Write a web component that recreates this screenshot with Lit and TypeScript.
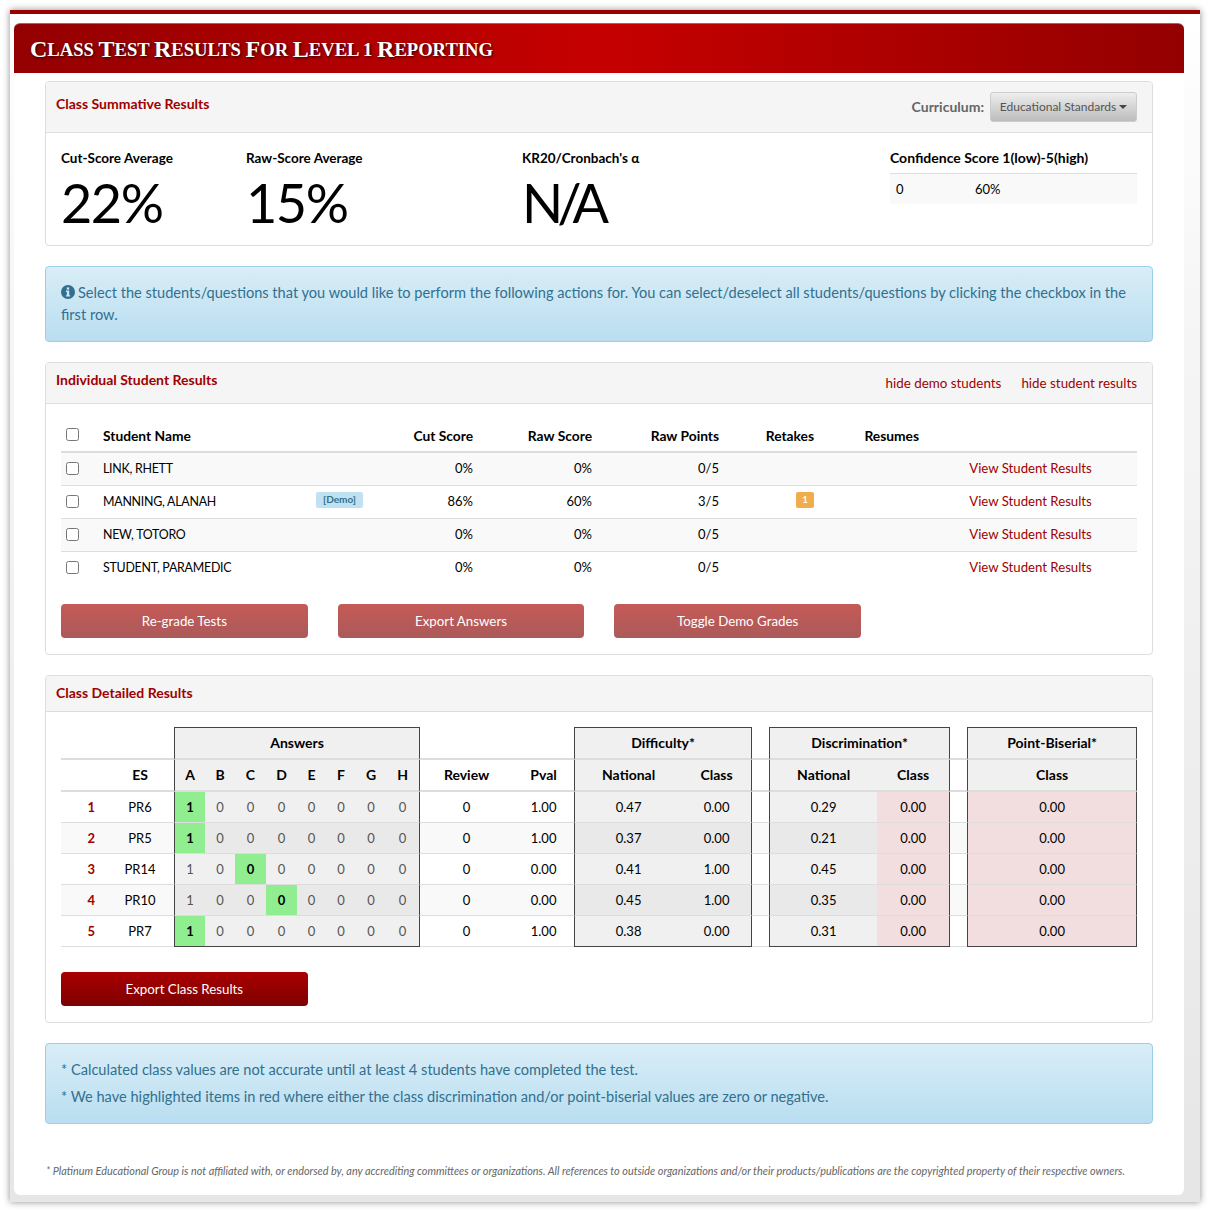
import { LitElement, html, css } from "lit";
import { customElement } from "lit/decorators.js";

const students = [
  { name: "LINK, RHETT", demo: false, cut: "0%", raw: "0%", pts: "0/5", retake: "" },
  { name: "MANNING, ALANAH", demo: true, cut: "86%", raw: "60%", pts: "3/5", retake: "1" },
  { name: "NEW, TOTORO", demo: false, cut: "0%", raw: "0%", pts: "0/5", retake: "" },
  { name: "STUDENT, PARAMEDIC", demo: false, cut: "0%", raw: "0%", pts: "0/5", retake: "" },
];

const questions = [
  { es: "PR6", ans: ["1", "0", "0", "0", "0", "0", "0", "0"], ok: 0, pval: "1.00", nat: "0.47", cls: "0.00", dn: "0.29" },
  { es: "PR5", ans: ["1", "0", "0", "0", "0", "0", "0", "0"], ok: 0, pval: "1.00", nat: "0.37", cls: "0.00", dn: "0.21" },
  { es: "PR14", ans: ["1", "0", "0", "0", "0", "0", "0", "0"], ok: 2, pval: "0.00", nat: "0.41", cls: "1.00", dn: "0.45" },
  { es: "PR10", ans: ["1", "0", "0", "0", "0", "0", "0", "0"], ok: 3, pval: "0.00", nat: "0.45", cls: "1.00", dn: "0.35" },
  { es: "PR7", ans: ["1", "0", "0", "0", "0", "0", "0", "0"], ok: 0, pval: "1.00", nat: "0.38", cls: "0.00", dn: "0.31" },
];

const studentCols = [34, 213, 63, 110, 119, 127, 95, 105, 210];
const classCols = [45, 68, 31, 30, 31, 31, 29, 30, 30, 34, 93, 61, 108, 70, 17, 108, 73, 17, 170];

@customElement("app-root")
export class AppRoot extends LitElement {
  static styles = css`
    :host { display: block; font-family: "Lato", "Liberation Sans", sans-serif; font-size: 14px; color: #000; }
    * { box-sizing: border-box; }
    .frame {
      margin: 10px 10px 10px;
      width: 1190px;
      height: 1192px;
      padding: 9px 16px 7px 4px;
      border-top: 4px solid #990000;
      background: linear-gradient(#ffffff, #f6f6f6 25%, #e6e6e6);
      box-shadow: 0 0 7px rgba(0, 0, 0, 0.45);
    }
    .sheet { width: 1170px; height: 1172px; background: #fff; border-radius: 6px; padding: 0 31px; }
    .banner {
      height: 50px;
      margin: 0 -31px 8px;
      padding: 2px 16px 0;
      display: flex;
      align-items: center;
      border-top: 1px solid #777;
      border-radius: 6px 6px 0 0;
      background: linear-gradient(90deg, #940000, #c60000 50%, #940000);
      color: #fff;
      font-family: "Liberation Serif", serif;
      font-weight: 700;
      text-transform: uppercase;
      font-size: 18.6px;
      text-shadow: 1px 1px 3px rgba(0, 0, 0, 0.8);
      white-space: pre;
    }
    .cap { font-size: 24px; }
    .card { background: #fff; border: 1px solid #ddd; border-radius: 4px; margin-bottom: 20px; }
    .head {
      display: flex;
      justify-content: space-between;
      align-items: flex-start;
      background: #f5f5f5;
      border-bottom: 1px solid #ddd;
      border-radius: 3px 3px 0 0;
      padding: 12px 15px 0 10px;
    }
    .h1 { height: 51px; }
    .h2 { height: 41px; padding-top: 7px; }
    .h3 { height: 36px; padding-top: 7px; }
    .title { color: #a00000; font-weight: 700; font-size: 14px; line-height: 20px; }
    .curric { display: flex; align-items: center; gap: 6px; margin-top: -2px; color: #666; font-weight: 700; font-size: 14px; }
    .curric-lab { padding-bottom: 2px; }
    .dd {
      width: 147px;
      height: 30px;
      display: flex;
      align-items: center;
      justify-content: center;
      gap: 3px;
      padding-bottom: 1px;
      border: 1px solid #ccc;
      border-radius: 3px;
      background: linear-gradient(#eeeeee, #bcbcbc);
      color: #555;
      font-weight: 400;
      font-size: 12px;
    }
    .caret { width: 0; height: 0; border-left: 4px solid transparent; border-right: 4px solid transparent; border-top: 4px solid #444; }
    .links { display: flex; gap: 20px; padding-top: 3px; }
    .link { color: #a00000; line-height: 20px; font-size: 13.4px; }
    .stats {
      display: grid;
      grid-template-columns: 185px 276px 368px 247px;
      height: 112px;
      padding: 15px 15px 0;
      width: 1106px;
    }
    .lab { font-weight: 700; font-size: 13.5px; line-height: 20px; }
    .big { font-size: 54px; line-height: 54px; margin-top: 8px; font-weight: 400; letter-spacing: -1.5px; }
    .na { letter-spacing: -6px; }
    .conf-lab { padding-bottom: 5px; border-bottom: 1px solid #ddd; height: 26px; font-size: 14px; }
    .conf-row { display: flex; height: 30px; align-items: center; background: #f9f9f9; font-size: 13px; padding-left: 6px; }
    .conf-row span:first-child { width: 79px; }
    .alert {
      border: 1px solid #9acfea;
      border-radius: 4px;
      background: linear-gradient(#d9edf7, #b9def0);
      color: #31708f;
      padding: 15px;
      margin-bottom: 20px;
      font-size: 14.6px;
      line-height: 22px;
    }
    .alert svg { width: 14px; height: 14px; vertical-align: -1px; margin-right: 3px; }
    .alert p { margin: 0 0 5px; }
    .alert p:last-child { margin: 0; }
    .body { padding: 15px 15px 16px; }
    table { border-collapse: separate; border-spacing: 0; table-layout: fixed; width: 1076px; }
    .st th { height: 34px; border-bottom: 2px solid #ddd; font-size: 13.8px; font-weight: 700; text-align: right; padding: 1px 8px 0; vertical-align: middle; }
    .st td { height: 33px; border-bottom: 1px solid #ddd; padding: 0 8px 3px; font-size: 13px; text-align: right; vertical-align: middle; }
    .st tr:last-child td { border-bottom: 0; height: 32px; }
    .st tbody tr:nth-child(odd) td { background: #f9f9f9; }
    .st th.l, .st td.l { text-align: left; }
    .st td.nm { text-align: left; font-size: 12.4px; letter-spacing: -0.25px; padding-bottom: 1px; }
    .st td.c { text-align: center; }
    .st th.chk { padding: 0 0 2px 5px; text-align: left; }
    .st td.chk { padding: 0 0 1px 5px; text-align: left; }
    input { margin: 0; width: 13px; height: 13px; display: block; }
    .st td.view { color: #a00000; padding-right: 11px; font-size: 13.2px; }
    .lbl {
      display: inline-block;
      height: 16px;
      margin: 0 0 2px;
      padding: 0 7px;
      border-radius: 2px;
      background: #bfe1f2;
      color: #31708f;
      font-size: 10px;
      font-weight: 700;
      line-height: 14px;
      vertical-align: middle;
    }
    .badge {
      display: inline-block;
      width: 18px;
      height: 16px;
      margin-bottom: 2px;
      border-radius: 2px;
      background: #f0ad4e;
      color: #fff;
      text-align: center;
      font-size: 9px;
      font-weight: 700;
      line-height: 15px;
      vertical-align: middle;
    }
    .btns { display: flex; gap: 30px; margin-top: 20px; }
    .btn {
      width: 246.67px;
      height: 34px;
      display: flex;
      align-items: center;
      justify-content: center;
      border: 0;
      border-radius: 4px;
      color: #fff;
      font: inherit;
      font-size: 13.3px;
      padding: 0;
    }
    .muted { background: linear-gradient(#c55a57, #ab5a5a); }
    .solid { background: linear-gradient(#aa0000, #7d0000); margin-top: 25px; }
    .cl th { background: #fff; border-bottom: 2px solid #ddd; font-size: 14px; font-weight: 700; text-align: center; padding: 0 0 2px; }
    .cl .r1 th { height: 33px; }
    .cl .r2 th { height: 32px; }
    .cl td { height: 31px; border-bottom: 1px solid #ddd; font-size: 13px; text-align: center; padding: 0; vertical-align: middle; }
    .cl tbody tr:nth-child(even) td { background: #f9f9f9; }
    .cl th.box, .cl td.box { background: #f0f0f0; }
    .cl tbody tr:nth-child(even) td.box { background: #e9e9e9; }
    .cl .top { border-top: 1px solid #444; }
    .cl .bl { border-left: 1px solid #444; }
    .cl .br { border-right: 1px solid #444; }
    .cl tbody tr:last-child .box { border-bottom: 1px solid #444; }
    .cl td.num { color: #a00000; font-weight: 700; text-align: right; padding-right: 11px; }
    .cl td.ans { color: #555; }
    .cl td.ok, .cl tbody tr:nth-child(even) td.ok { background: #90ee90; color: #000; font-weight: 700; }
    .cl td.bad, .cl tbody tr:nth-child(even) td.bad { background: #f2dede; }
    .foot { margin: 40px 0 0 1px; color: #666; font-size: 10.85px; font-style: italic; line-height: 14px; white-space: nowrap; }
  `;

  private info() {
    return html`<svg viewBox="0 0 14 14" aria-hidden="true">
      <circle cx="7" cy="7" r="7" fill="#31708f"></circle>
      <rect x="5.8" y="2.4" width="2.4" height="2.2" fill="#cfe8f5"></rect>
      <path d="M4.9 5.6h3.3v4.6h1v1.4H4.9v-1.4h1V7H4.9z" fill="#cfe8f5"></path>
    </svg>`;
  }

  private colgroup(cols: number[]) {
    return html`<colgroup>${cols.map((w) => html`<col style="width:${w}px" />`)}</colgroup>`;
  }

  private summary() {
    return html`<section class="card">
      <div class="head h1">
        <div class="title">Class Summative Results</div>
        <div class="curric"><span class="curric-lab">Curriculum:</span>
          <div class="dd">Educational Standards <span class="caret"></span></div>
        </div>
      </div>
      <div class="stats">
        <div><div class="lab">Cut-Score Average</div><div class="big">22%</div></div>
        <div><div class="lab">Raw-Score Average</div><div class="big">15%</div></div>
        <div><div class="lab">KR20/Cronbach's α</div><div class="big na">N/A</div></div>
        <div>
          <div class="lab conf-lab">Confidence Score 1(low)-5(high)</div>
          <div class="conf-row"><span>0</span><span>60%</span></div>
        </div>
      </div>
    </section>`;
  }

  private studentsCard() {
    return html`<section class="card">
      <div class="head h2">
        <div class="title">Individual Student Results</div>
        <div class="links"><span class="link">hide demo students</span><span class="link">hide student results</span></div>
      </div>
      <div class="body">
        <table class="st">
          ${this.colgroup(studentCols)}
          <thead>
            <tr>
              <th class="chk"><input type="checkbox" /></th>
              <th class="l" colspan="2">Student Name</th>
              <th>Cut Score</th><th>Raw Score</th><th>Raw Points</th><th>Retakes</th><th>Resumes</th><th></th>
            </tr>
          </thead>
          <tbody>
            ${students.map((s) => html`<tr>
              <td class="chk"><input type="checkbox" /></td>
              <td class="nm">${s.name}</td>
              <td class="l">${s.demo ? html`<span class="lbl">[Demo]</span>` : ""}</td>
              <td>${s.cut}</td><td>${s.raw}</td><td>${s.pts}</td>
              <td>${s.retake ? html`<span class="badge">${s.retake}</span>` : ""}</td>
              <td></td>
              <td class="c view">View Student Results</td>
            </tr>`)}
          </tbody>
        </table>
        <div class="btns">
          <button class="btn muted">Re-grade Tests</button>
          <button class="btn muted">Export Answers</button>
          <button class="btn muted">Toggle Demo Grades</button>
        </div>
      </div>
    </section>`;
  }

  private detail() {
    const letters = ["A", "B", "C", "D", "E", "F", "G", "H"];
    return html`<section class="card">
      <div class="head h3"><div class="title">Class Detailed Results</div></div>
      <div class="body">
        <table class="cl">
          ${this.colgroup(classCols)}
          <thead>
            <tr class="r1">
              <th colspan="2"></th>
              <th class="box top bl br" colspan="8">Answers</th>
              <th colspan="2"></th>
              <th class="box top bl br" colspan="2">Difficulty*</th>
              <th></th>
              <th class="box top bl br" colspan="2">Discrimination*</th>
              <th></th>
              <th class="box top bl br">Point-Biserial*</th>
            </tr>
            <tr class="r2">
              <th></th><th>ES</th>
              ${letters.map((l, i) => html`<th class="box ${i === 0 ? "bl" : ""} ${i === 7 ? "br" : ""}">${l}</th>`)}
              <th>Review</th><th>Pval</th>
              <th class="box bl">National</th><th class="box br">Class</th>
              <th></th>
              <th class="box bl">National</th><th class="box br">Class</th>
              <th></th>
              <th class="box bl br">Class</th>
            </tr>
          </thead>
          <tbody>
            ${questions.map((q, r) => html`<tr>
              <td class="num">${r + 1}</td>
              <td>${q.es}</td>
              ${q.ans.map((a, i) => html`<td class="box ans ${i === q.ok ? "ok" : ""} ${i === 0 ? "bl" : ""} ${i === 7 ? "br" : ""}">${a}</td>`)}
              <td>0</td><td>${q.pval}</td>
              <td class="box bl">${q.nat}</td><td class="box br">${q.cls}</td>
              <td></td>
              <td class="box bl">${q.dn}</td><td class="box bad br">0.00</td>
              <td></td>
              <td class="box bad bl br">0.00</td>
            </tr>`)}
          </tbody>
        </table>
        <button class="btn solid">Export Class Results</button>
      </div>
    </section>`;
  }

  render() {
    return html`<div class="frame">
      <div class="sheet">
        <div class="banner"><span class="cap">C</span>lass <span class="cap">T</span>est <span class="cap">R</span>esults <span class="cap">F</span>or <span class="cap">L</span>evel 1 <span class="cap">R</span>eporting</div>
        ${this.summary()}
        <div class="alert">${this.info()}Select the students/questions that you would like to perform the following actions for. You can select/deselect all students/questions by clicking the checkbox in the first row.</div>
        ${this.studentsCard()}
        ${this.detail()}
        <div class="alert">
          <p>* Calculated class values are not accurate until at least 4 students have completed the test.</p>
          <p>* We have highlighted items in red where either the class discrimination and/or point-biserial values are zero or negative.</p>
        </div>
        <div class="foot">* Platinum Educational Group is not affiliated with, or endorsed by, any accrediting committees or organizations. All references to outside organizations and/or their products/publications are the copyrighted property of their respective owners.</div>
      </div>
    </div>`;
  }
}
